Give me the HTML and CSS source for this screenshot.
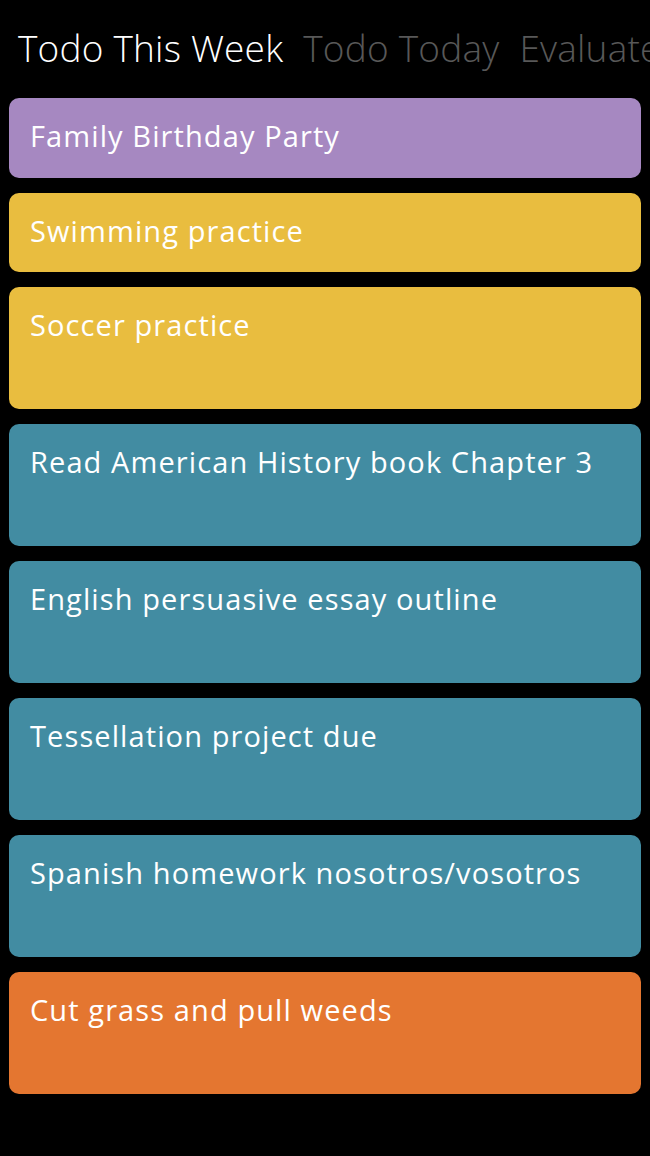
FILE: index.html
```html
<!DOCTYPE html>
<html>
<head>
<meta charset="utf-8">
<link rel="stylesheet" href="styles.css">
</head>
<body>
<div class="app">
  <nav class="tabs">
    <span class="tab active">Todo This Week</span>
    <span class="tab">Todo Today</span>
    <span class="tab">Evaluate</span>
  </nav>
  <div class="list">
    <div class="card purple short">Family Birthday Party</div>
    <div class="card yellow short2">Swimming practice</div>
    <div class="card yellow">Soccer practice</div>
    <div class="card teal">Read American History book Chapter 3</div>
    <div class="card teal">English persuasive essay outline</div>
    <div class="card teal">Tessellation project due</div>
    <div class="card teal">Spanish homework nosotros/vosotros</div>
    <div class="card orange">Cut grass and pull weeds</div>
  </div>
</div>
</body>
</html>
```

FILE: styles.css
```css
html, body {
  margin: 0;
  padding: 0;
  background: #000;
  height: 100%;
}
.app {
  width: 650px;
  height: 1156px;
  overflow: hidden;
  background: #000;
}
.tabs {
  display: flex;
  gap: 20px;
  padding: 23px 0 0 18px;
  height: 74px;
  box-sizing: border-box;
  white-space: nowrap;
  font-family: "Open Sans", sans-serif;
  font-weight: 300;
  font-size: 37px;
  letter-spacing: 0.2px;
  line-height: 50px;
}
.tab {
  color: #585858;
  flex: none;
}
.tab.active {
  color: #fff;
}
.list {
  display: flex;
  flex-direction: column;
  gap: 15px;
  padding: 24px 9px 0 9px;
}
.card {
  height: 122px;
  box-sizing: border-box;
  border-radius: 10px;
  padding: 19px 21px 0 21px;
  font-family: "Open Sans", sans-serif;
  font-size: 29px;
  letter-spacing: 1.1px;
  line-height: 38px;
  color: #fff;
}
.card.short { height: 80px; }
.card.short2 { height: 79px; }
.purple { background: #a688c1; }
.yellow { background: #e9bd3f; }
.teal { background: #428ca2; }
.orange { background: #e47630; }
```
